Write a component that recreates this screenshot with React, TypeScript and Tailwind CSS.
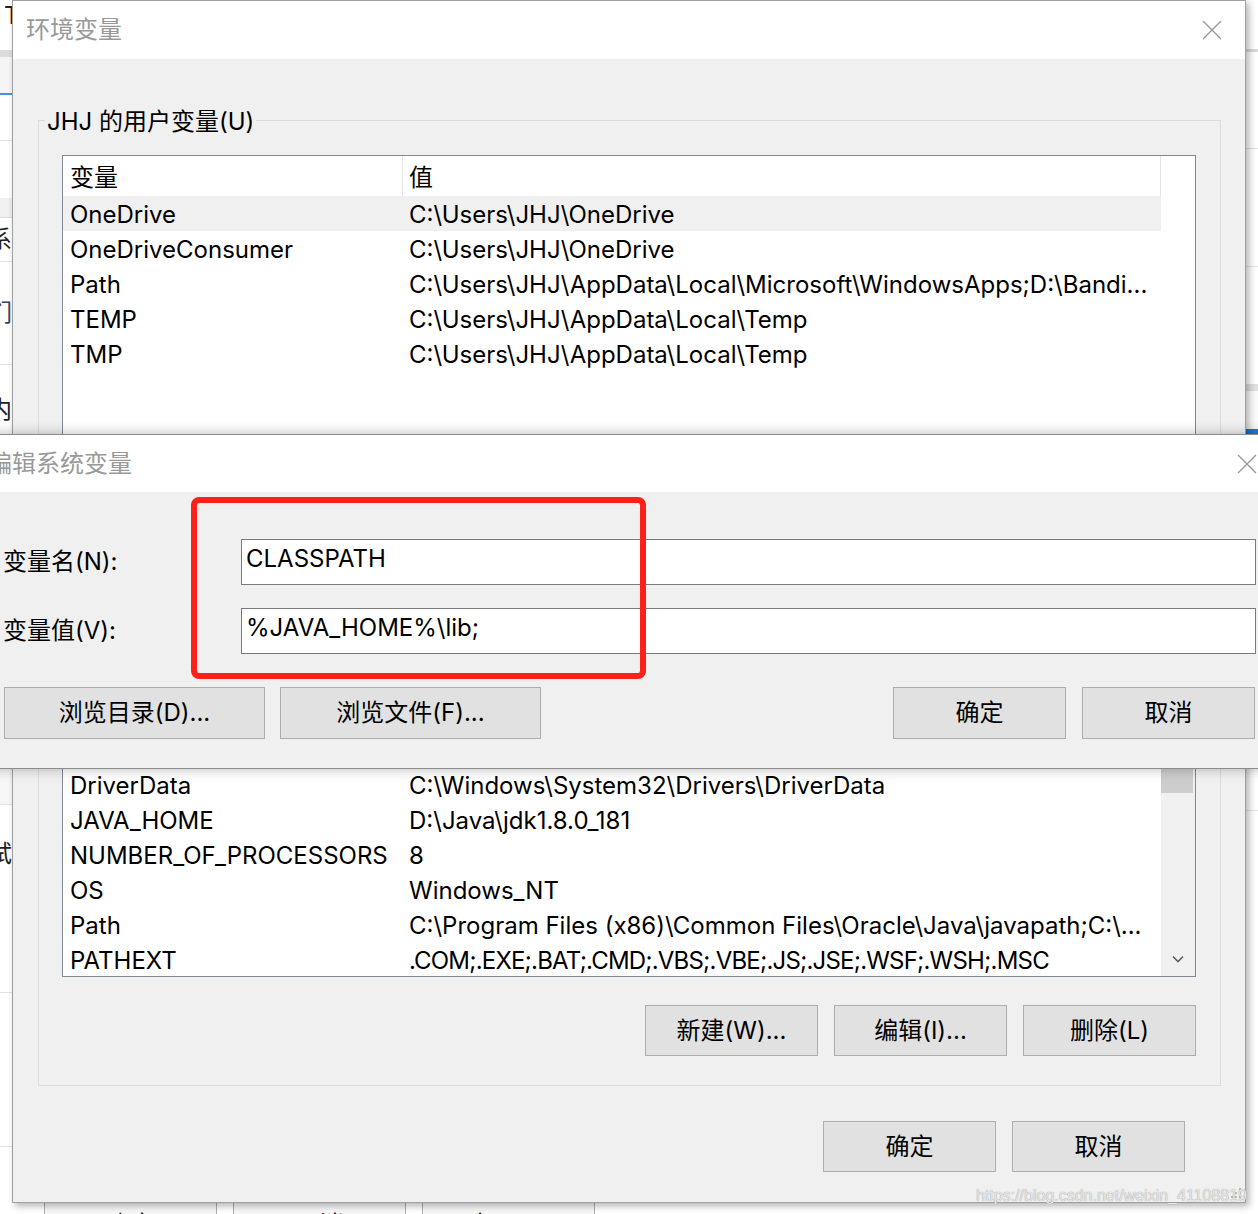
import React from 'react';

// name, value, optional extra class for the value cell
type Row = [string, string, string?];

const userRows: Row[] = [
  ['OneDrive', 'C:\\Users\\JHJ\\OneDrive'],
  ['OneDriveConsumer', 'C:\\Users\\JHJ\\OneDrive'],
  ['Path', 'C:\\Users\\JHJ\\AppData\\Local\\Microsoft\\WindowsApps;D:\\Bandi...'],
  ['TEMP', 'C:\\Users\\JHJ\\AppData\\Local\\Temp'],
  ['TMP', 'C:\\Users\\JHJ\\AppData\\Local\\Temp'],
];

const systemRows: Row[] = [
  ['DriverData', 'C:\\Windows\\System32\\Drivers\\DriverData'],
  ['JAVA_HOME', 'D:\\Java\\jdk1.8.0_181'],
  ['NUMBER_OF_PROCESSORS', '8'],
  ['OS', 'Windows_NT'],
  ['Path', 'C:\\Program Files (x86)\\Common Files\\Oracle\\Java\\javapath;C:\\...'],
  ['PATHEXT', '.COM;.EXE;.BAT;.CMD;.VBS;.VBE;.JS;.JSE;.WSF;.WSH;.MSC', 'tracking-[-0.8px]'],
];

function CloseIcon() {
  return (
    <svg width="20" height="20" viewBox="0 0 20 20" className="shrink-0">
      <path d="M1 1L19 19M19 1L1 19" stroke="#9a9a9a" strokeWidth="1.4" fill="none" />
    </svg>
  );
}

function Chevron({ up = false }: { up?: boolean }) {
  return (
    <svg width="12" height="8" viewBox="0 0 12 8">
      <path
        d={up ? 'M1 6.5L6 1.5L11 6.5' : 'M1 1.5L6 6.5L11 1.5'}
        fill="none"
        stroke="#606060"
        strokeWidth="1.6"
      />
    </svg>
  );
}

function WinButton({ label, className = '' }: { label: string; className?: string }) {
  return (
    <button
      type="button"
      className={`flex shrink-0 items-center justify-center border border-[#adadad] bg-[#e1e1e1] text-[24px] leading-none text-black ${className}`}
    >
      {label}
    </button>
  );
}

function VarList({
  rows,
  selected,
  height,
  scrollbar = false,
}: {
  rows: Row[];
  selected?: number;
  height: string;
  scrollbar?: boolean;
}) {
  return (
    <div className={`flex overflow-hidden border border-[#828790] bg-white ${height}`}>
      <div className="flex w-[1098px] shrink-0 flex-col">
        <div className="flex h-[40px] shrink-0 text-[24px] leading-[43px]">
          <div className="w-[340px] shrink-0 border-r border-[#e5e5e5] pl-[7px]">变量</div>
          <div className="flex-1 border-r border-[#e5e5e5] pl-[6px]">值</div>
        </div>
        {rows.map(([name, value, extra], i) => (
          <div
            key={name + i}
            className={`flex h-[35px] shrink-0 text-[24px] leading-[37px] ${i === selected ? 'bg-[#f0f0f0]' : ''}`}
          >
            <div className="w-[340px] shrink-0 whitespace-nowrap pl-[7px]">{name}</div>
            <div className={`flex-1 overflow-hidden whitespace-nowrap pl-[6px] ${extra ?? ''}`}>{value}</div>
          </div>
        ))}
      </div>
      {scrollbar && (
        <div className="flex flex-1 flex-col bg-[#f0f0f0]">
          <div className="flex h-[35px] shrink-0 items-center justify-center">
            <Chevron up />
          </div>
          <div className="mr-[2px] h-[31px] shrink-0 bg-[#cdcdcd]" />
          <div className="flex-1" />
          <div className="flex h-[35px] shrink-0 items-center justify-center">
            <Chevron />
          </div>
        </div>
      )}
    </div>
  );
}

function GroupBox({
  title,
  className = '',
  children,
}: {
  title: string;
  className?: string;
  children: React.ReactNode;
}) {
  return (
    <div className={`relative border border-[#dcdcdc] pb-[29px] pl-[23px] pr-[24px] pt-[34px] ${className}`}>
      <span className="absolute left-[6px] top-[-13px] bg-[#f0f0f0] px-[2px] text-[24px] leading-[28px]">
        {title}
      </span>
      {children}
    </div>
  );
}

function BackdropWindow() {
  return (
    <div className="absolute inset-0 flex bg-white">
      {/* left edge of the window behind */}
      <div className="flex w-[12px] shrink-0 flex-col overflow-hidden text-[24px] text-[#222]">
        <div className="h-[50px] shrink-0 pl-[4px] pt-[2px] leading-[28px]">T</div>
        <div className="h-[7px] shrink-0 bg-[#dcdcdc]" />
        <div className="h-[36px] shrink-0 bg-[#f5f5f5]" />
        <div className="h-[2px] shrink-0 bg-[#4a90d9]" />
        <div className="h-[46px] shrink-0 border-b border-[#e3e3e3]" />
        <div className="h-[57px] shrink-0" />
        <div className="h-[20px] shrink-0 border-b border-[#dcdcdc] bg-[#f0f0f0]" />
        <div className="flex h-[44px] shrink-0 items-center justify-end border-b border-[#e3e3e3] leading-none">系</div>
        <div className="flex h-[103px] shrink-0 items-center justify-end border-b border-[#e3e3e3] leading-none text-[#334466]">们</div>
        <div className="flex h-[90px] shrink-0 items-center justify-end leading-none">内</div>
        <div className="h-[350px] shrink-0 border-b border-[#e3e3e3] bg-[#f7f7f7]" />
        <div className="flex h-[188px] shrink-0 items-start justify-end border-b border-[#e3e3e3] pt-[37px] leading-none">试</div>
        <div className="h-[154px] shrink-0 border-b border-[#e3e3e3]" />
        <div className="flex-1" />
      </div>

      {/* buttons of the window behind, peeking out at the bottom */}
      <div className="flex flex-1 flex-col justify-end">
        <div className="flex h-[34px] shrink-0 items-start gap-[16px] pl-[32px]">
          {['确定', '取消', '应用(A)'].map((t) => (
            <div
              key={t}
              className="h-[60px] w-[173px] shrink-0 border border-[#adadad] bg-[#f7f7f7] pt-[28px] text-center text-[24px] leading-[32px] text-[#222]"
            >
              {t}
            </div>
          ))}
        </div>
      </div>

      {/* right edge of the window behind */}
      <div className="flex w-[12px] shrink-0 flex-col">
        <div className="h-[49px] shrink-0" />
        <div className="h-[3px] shrink-0 bg-[#d9d9d9]" />
        <div className="h-[97px] shrink-0 border-b border-[#dedede]" />
        <div className="h-[118px] shrink-0 border-b border-[#e3e3e3]" />
        <div className="h-[117px] shrink-0" />
        <div className="h-[7px] shrink-0 bg-[#e0e0e0]" />
        <div className="h-[38px] shrink-0 bg-[#fafafa]" />
        <div className="h-[5px] shrink-0 bg-[#1e7fd8]" />
        <div className="h-[377px] shrink-0 border-b border-[#e3e3e3]" />
        <div className="flex-1" />
      </div>
    </div>
  );
}

function EnvDialog() {
  return (
    <div className="absolute left-[12px] top-0 flex h-[1203px] w-[1234px] flex-col border border-[#a0a0a0] bg-[#f0f0f0] shadow-[3px_3px_7px_rgba(0,0,0,0.3)]">
      <div className="flex h-[58px] shrink-0 items-center justify-between bg-white pl-[13px] pr-[23px]">
        <span className="text-[24px] leading-none text-[#999999]">环境变量</span>
        <CloseIcon />
      </div>

      <div className="flex flex-1 flex-col pl-[25px] pr-[24px]">
        <GroupBox title="JHJ 的用户变量(U)" className="mt-[61px]">
          <VarList rows={userRows} selected={0} height="h-[290px]" />
          <div className="mt-[29px] flex justify-end gap-[16px]">
            <WinButton label="新建(N)..." className="h-[51px] w-[173px]" />
            <WinButton label="编辑(E)..." className="h-[51px] w-[173px]" />
            <WinButton label="删除(D)" className="h-[51px] w-[173px]" />
          </div>
        </GroupBox>

        <GroupBox title="系统变量(S)" className="mt-[35px]">
          {/* the top of this list lies behind the edit dialog */}
          <div className="h-[101px]" />
          <VarList rows={systemRows} height="h-[251px]" scrollbar />
          <div className="mt-[28px] flex justify-end gap-[16px]">
            <WinButton label="新建(W)..." className="h-[51px] w-[173px]" />
            <WinButton label="编辑(I)..." className="h-[51px] w-[173px]" />
            <WinButton label="删除(L)" className="h-[51px] w-[173px]" />
          </div>
        </GroupBox>

        <div className="mr-[36px] mt-[35px] flex justify-end gap-[16px]">
          <WinButton label="确定" className="h-[51px] w-[173px]" />
          <WinButton label="取消" className="h-[51px] w-[173px]" />
        </div>
      </div>

      {/* size grip */}
      <svg width="12" height="12" viewBox="0 0 12 12" className="absolute bottom-[3px] right-[3px]">
        <g fill="#b8b8b8">
          <rect x="9" y="1" width="2" height="2" />
          <rect x="9" y="5" width="2" height="2" />
          <rect x="5" y="5" width="2" height="2" />
          <rect x="9" y="9" width="2" height="2" />
          <rect x="5" y="9" width="2" height="2" />
          <rect x="1" y="9" width="2" height="2" />
        </g>
      </svg>
    </div>
  );
}

function EditDialog() {
  return (
    <div className="absolute left-[-16px] top-[434px] flex h-[335px] w-[1288px] flex-col border border-[#8c8c8c] bg-[#f0f0f0] shadow-[0_0_12px_rgba(0,0,0,0.28)]">
      <div className="flex h-[57px] shrink-0 items-center justify-between bg-white pl-[3px] pr-[14px]">
        <span className="text-[24px] leading-none text-[#999999]">编辑系统变量</span>
        <CloseIcon />
      </div>

      <div className="flex flex-1 flex-col pl-[18px] pr-[15px] pt-[47px]">
        <div className="grid grid-cols-[238px_1fr] items-center">
          <span className="text-[24px] leading-none">变量名(N):</span>
          <div className="h-[46px] border border-[#7a7a7a] bg-white pl-[4px] pt-[3px] text-[24px] leading-[32px]">
            CLASSPATH
          </div>
        </div>
        <div className="mt-[23px] grid grid-cols-[238px_1fr] items-center">
          <span className="text-[24px] leading-none">变量值(V):</span>
          <div className="h-[46px] border border-[#7a7a7a] bg-white pl-[4px] pt-[3px] text-[24px] leading-[32px]">
            %JAVA_HOME%\lib;
          </div>
        </div>

        <div className="ml-[1px] mr-[1px] mt-[33px] flex">
          <WinButton label="浏览目录(D)..." className="h-[52px] w-[261px]" />
          <WinButton label="浏览文件(F)..." className="ml-[15px] h-[52px] w-[261px]" />
          <div className="flex-1" />
          <WinButton label="确定" className="h-[52px] w-[173px]" />
          <WinButton label="取消" className="ml-[16px] h-[52px] w-[173px]" />
        </div>
      </div>
    </div>
  );
}

export default function App() {
  return (
    <div className="relative h-[1214px] w-[1258px] overflow-hidden bg-white font-['Inter','Noto_Sans_CJK_SC',sans-serif] text-black">
      <BackdropWindow />
      <EnvDialog />
      <EditDialog />

      {/* red annotation box */}
      <div className="absolute left-[191px] top-[497px] h-[182px] w-[455px] rounded-[8px] border-[6px] border-[#ff2019]" />

      {/* watermark */}
      <div className="absolute left-[976px] top-[1184px] whitespace-nowrap font-['Liberation_Sans',sans-serif] text-[16px] leading-[24px] text-[#e6e6e6] [text-shadow:0_0_1px_#8a8a8a]">
        https://blog.csdn.net/weixin_41108819
      </div>
    </div>
  );
}
